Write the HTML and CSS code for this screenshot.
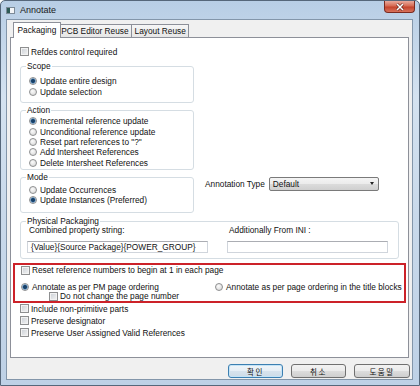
FILE: index.html
```html
<!DOCTYPE html>
<html lang="ko">
<head>
    <meta charset="UTF-8">
    <title>Annotate</title>
    <link rel="stylesheet" href="styles.css">
</head>
<body>
    <div id="window">
        <div id="title-bar">
            <div class="app-icon"></div>
            <div class="title-text">Annotate</div>
            <div class="close-btn">
                <svg width="10" height="8" viewBox="0 0 10 8">
                    <path d="M2 1 L8 7 M8 1 L2 7" stroke="#5a1a12" stroke-width="2.6"/>
                    <path d="M2 1 L8 7 M8 1 L2 7" stroke="#fff" stroke-width="1.6"/>
                </svg>
            </div>
        </div>

        <div id="client">
            <div class="tab-strip">
                <div class="tab active">Packaging</div>
                <div class="tab">PCB Editor Reuse</div>
                <div class="tab">Layout Reuse</div>
            </div>

            <div class="tab-panel">
                <div class="row">
                    <span class="checkbox"></span>Refdes control required
                </div>

                <fieldset class="group scope-group">
                    <legend>Scope</legend>
                    <div class="row"><span class="radio checked"></span>Update entire design</div>
                    <div class="row"><span class="radio"></span>Update selection</div>
                </fieldset>

                <fieldset class="group action-group">
                    <legend>Action</legend>
                    <div class="row"><span class="radio checked"></span>Incremental reference update</div>
                    <div class="row"><span class="radio"></span>Unconditional reference update</div>
                    <div class="row"><span class="radio"></span>Reset part references to "?"</div>
                    <div class="row"><span class="radio"></span>Add Intersheet References</div>
                    <div class="row"><span class="radio"></span>Delete Intersheet References</div>
                </fieldset>

                <div class="mode-line">
                    <fieldset class="group mode-group">
                        <legend>Mode</legend>
                        <div class="row"><span class="radio"></span>Update Occurrences</div>
                        <div class="row"><span class="radio checked"></span>Update Instances (Preferred)</div>
                    </fieldset>

                    <div class="annotation-type">
                        <span>Annotation Type</span>
                        <div class="dropdown">
                            <span>Default</span>
                            <span class="dropdown-arrow"></span>
                        </div>
                    </div>
                </div>

                <fieldset class="group physical-group">
                    <legend>Physical Packaging</legend>
                    <div class="field-grid">
                        <div class="field-label">Combined property string:</div>
                        <div class="field-label">Additionally From INI :</div>
                        <div class="textbox">{Value}{Source Package}{POWER_GROUP}</div>
                        <div class="textbox"></div>
                    </div>
                </fieldset>

                <div class="highlight">
                    <div class="row">
                        <span class="checkbox"></span>Reset reference numbers to begin at 1 in each page
                    </div>
                    <div class="row order-row">
                        <div class="row"><span class="radio checked"></span>Annotate as per PM page ordering</div>
                        <div class="row"><span class="radio"></span>Annotate as per page ordering in the title blocks</div>
                    </div>
                    <div class="row keep-row">
                        <span class="checkbox"></span>Do not change the page number
                    </div>
                </div>

                <div class="row tall"><span class="checkbox"></span>Include non-primitive parts</div>
                <div class="row tall"><span class="checkbox"></span>Preserve designator</div>
                <div class="row tall"><span class="checkbox"></span>Preserve User Assigned Valid References</div>
            </div>

            <div class="button-row">
                <div class="btn default">확인</div>
                <div class="btn">취소</div>
                <div class="btn wide">도움말</div>
            </div>
        </div>
    </div>
</body>
</html>
```

FILE: styles.css
```css
* {
    box-sizing: border-box;
}

body {
    margin: 0;
    font-family: "Liberation Sans", Arial, "Noto Sans CJK KR", sans-serif;
    font-size: 8.3px;
    color: #111;
    background: #fff;
}

#window {
    width: 420px;
    height: 386px;
    display: flex;
    flex-direction: column;
    border: 1px solid #56677a;
    border-radius: 5px 5px 0 0;
    background: linear-gradient(180deg, #b8cee5 0%, #d4e2f0 25%, #c9d9ea 55%, #bed1e6 100%);
}

/* title bar */
#title-bar {
    height: 18px;
    display: flex;
    align-items: center;
    padding-left: 5px;
}

.app-icon {
    width: 9px;
    height: 7px;
    margin-right: 5px;
    border: 1px solid #7d8b98;
    background: linear-gradient(90deg, #2d5a55 0 3px, #f3f5f7 3px);
}

.title-text {
    font-size: 9px;
    color: #1a1a1a;
}

.close-btn {
    align-self: flex-start;
    margin-left: auto;
    margin-right: 4px;
    width: 31px;
    height: 12px;
    display: flex;
    align-items: center;
    justify-content: center;
    border: 1px solid #7b2b20;
    border-top: none;
    border-radius: 0 0 4px 4px;
    background: linear-gradient(180deg, #e9aa9d 0%, #d66a53 45%, #c4432c 55%, #d8735c 100%);
}

/* client area */
#client {
    flex: 1;
    display: flex;
    flex-direction: column;
    margin: 0 6px 5px 5px;
    padding: 2px 3px 1px;
    border: 1px solid #8396aa;
    background: #f0f0f0;
}

.tab-strip {
    display: flex;
    align-items: flex-end;
    height: 15px;
    padding-left: 5px;
}

.tab {
    position: relative;
    height: 13px;
    margin-left: -1px;
    padding: 0 2.5px;
    line-height: 12px;
    white-space: nowrap;
    border: 1px solid #8d9099;
    border-bottom: none;
    background: linear-gradient(180deg, #f6f6f6, #e6e6e6);
}

.tab:first-child {
    margin-left: 0;
}

.tab.active {
    z-index: 2;
    height: 16px;
    margin: 0 -2px -1px;
    padding: 1px 3.5px 0;
    line-height: 13px;
    background: #fff;
}

.tab-panel {
    flex: 1;
    padding: 8px 9px 0;
    border: 1px solid #8d9099;
    background: #fff;
}

/* rows, check boxes and radio buttons */
.row {
    display: flex;
    align-items: center;
    height: 11px;
    white-space: nowrap;
}

.row.tall {
    height: 12px;
}

.checkbox {
    flex: none;
    width: 9px;
    height: 9px;
    margin-right: 2px;
    border: 1px solid #8e8f90;
    background: linear-gradient(135deg, #c9ced4, #f5f5f5);
    box-shadow: inset 0 0 0 1px #f2f2f2;
}

.radio {
    flex: none;
    width: 8px;
    height: 8px;
    margin-right: 3px;
    border-radius: 50%;
    border: 1px solid #8e8f90;
    background: radial-gradient(circle at 40% 35%, #fbfbfb, #d3d3d3);
}

.radio.checked {
    background: radial-gradient(circle, #173f66 0 1.5px, #4f87ba 2.2px, #c9d6e2 3px, #e4e4e4 100%);
}

/* group boxes */
.group {
    width: 174px;
    min-inline-size: 0;
    margin: 0;
    padding: 0 8px;
    border: 1px solid #d5dde3;
    border-radius: 3px;
}

.group legend {
    margin-left: -3px;
    padding: 0 1px;
    line-height: 11px;
}

.scope-group {
    margin-top: 4px;
    padding-top: 3px;
    padding-bottom: 4px;
}

.scope-group .row {
    height: 11.5px;
}

.action-group {
    margin-top: 2px;
    padding-bottom: 1.5px;
}

.action-group .row {
    height: 10.4px;
}

.mode-line {
    display: flex;
    align-items: flex-start;
    margin-top: 2px;
}

.mode-group {
    padding-top: 1.5px;
    padding-bottom: 7.5px;
}

.mode-group .row {
    height: 10px;
}

.annotation-type {
    display: flex;
    align-items: center;
    gap: 4px;
    margin: 4.5px 0 0 11px;
}

.dropdown {
    width: 110px;
    height: 14px;
    display: flex;
    align-items: center;
    justify-content: space-between;
    padding: 0 4px 0 3px;
    border: 1px solid #7a7a7a;
    border-radius: 2px;
    background: linear-gradient(180deg, #f4f4f4 0%, #ebebeb 50%, #dcdcdc 50%, #cfcfcf 100%);
}

.dropdown-arrow {
    width: 0;
    height: 0;
    border-left: 2.5px solid transparent;
    border-right: 2.5px solid transparent;
    border-top: 3px solid #222;
}

.physical-group {
    width: auto;
    margin-top: 3px;
    padding-bottom: 5.5px;
}

.field-grid {
    display: grid;
    grid-template-columns: 181px 161px;
    column-gap: 19px;
    margin: -1px 0 0 -2px;
}

.field-label {
    padding-left: 2px;
    line-height: 9px;
}

.textbox {
    height: 12px;
    margin-top: 5.5px;
    padding-left: 3px;
    line-height: 10px;
    white-space: nowrap;
    border: 1px solid #d0d5dc;
    border-top-color: #abadb3;
}

/* red highlight */
.highlight {
    margin: 3.5px -7px 0;
    padding-left: 6px;
    border: 2px solid #cc2229;
}

.order-row {
    display: grid;
    grid-template-columns: 194px auto;
    height: 10px;
    margin-top: 5.5px;
}

.keep-row {
    height: 9.5px;
    padding-left: 28px;
}

/* dialog buttons */
.button-row {
    display: flex;
    justify-content: flex-end;
    gap: 8px;
    margin: 6px -1px 0 0;
}

.btn {
    width: 55px;
    height: 14px;
    display: flex;
    align-items: center;
    justify-content: center;
    font-family: "Noto Sans CJK KR", sans-serif;
    font-size: 7.5px;
    letter-spacing: 1.5px;
    border: 1px solid #707070;
    border-radius: 3px;
    background: linear-gradient(180deg, #f2f2f2 0%, #ebebeb 50%, #dddddd 50%, #cfcfcf 100%);
}

.btn.default {
    border-color: #3c7fb1;
    box-shadow: inset 0 0 0 1px #c4e3f6;
    background: linear-gradient(180deg, #f0f5f9 0%, #e6eef5 50%, #d7e3ed 50%, #cddbe7 100%);
}

.btn.wide {
    width: 56px;
}
```
